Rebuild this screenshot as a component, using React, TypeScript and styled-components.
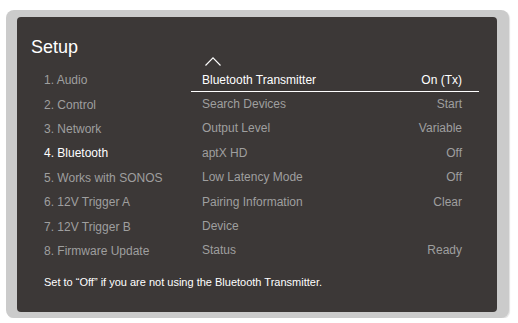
import React from "react";
import styled, { createGlobalStyle } from "styled-components";

const GlobalStyle = createGlobalStyle`
  html, body {
    margin: 0;
    padding: 0;
    background: #ffffff;
  }
  body {
    font-family: "Liberation Sans", Arial, sans-serif;
  }
`;

const Frame = styled.div`
  box-sizing: border-box;
  margin: 10px 0 0 6px;
  width: 503px;
  height: 308px;
  padding: 7px 12px 6px 11px;
  background: #cbcbcb;
  border-radius: 8px;
  box-shadow: 1px 1px 1px #e2e2e2;
`;

const Panel = styled.div`
  box-sizing: border-box;
  width: 480px;
  height: 295px;
  padding: 20px 0 0 14px;
  background: #3c3837;
  border-radius: 4px;
  display: flex;
  flex-direction: column;
`;

const Title = styled.div`
  font-size: 18px;
  line-height: 20px;
  color: #ffffff;
`;

const Columns = styled.div`
  display: flex;
  margin-left: 13px;
`;

const Menu = styled.div`
  width: 147px;
  padding-top: 11px;
  display: flex;
  flex-direction: column;
`;

const MenuItem = styled.div<{ $active?: boolean }>`
  height: 24.4px;
  display: flex;
  align-items: center;
  font-size: 12px;
  color: ${(p) => (p.$active ? "#ffffff" : "#9f9f9f")};
`;

const Settings = styled.div`
  width: 288px;
  display: flex;
  flex-direction: column;
`;

const CaretArea = styled.div`
  height: 11px;
  padding-left: 14px;
  svg {
    display: block;
  }
`;

const Row = styled.div<{ $selected?: boolean }>`
  box-sizing: border-box;
  height: 24.4px;
  padding: 0 17px 0 11px;
  display: flex;
  align-items: center;
  justify-content: space-between;
  font-size: 12px;
  color: ${(p) => (p.$selected ? "#ffffff" : "#9f9f9f")};
  border-bottom: 1px solid ${(p) => (p.$selected ? "#ffffff" : "transparent")};
`;

const Hint = styled.div`
  margin: 13px 0 0 13px;
  font-size: 11px;
  line-height: 13px;
  color: #ffffff;
`;

const menu = [
  "1. Audio",
  "2. Control",
  "3. Network",
  "4. Bluetooth",
  "5. Works with SONOS",
  "6. 12V Trigger A",
  "7. 12V Trigger B",
  "8. Firmware Update",
];

const settings: [string, string][] = [
  ["Bluetooth Transmitter", "On (Tx)"],
  ["Search Devices", "Start"],
  ["Output Level", "Variable"],
  ["aptX HD", "Off"],
  ["Low Latency Mode", "Off"],
  ["Pairing Information", "Clear"],
  ["Device", ""],
  ["Status", "Ready"],
];

function App() {
  return (
    <>
      <GlobalStyle />
      <Frame>
        <Panel>
          <Title>Setup</Title>
          <Columns>
            <Menu>
              {menu.map((m) => (
                <MenuItem key={m} $active={m === "4. Bluetooth"}>
                  {m}
                </MenuItem>
              ))}
            </Menu>
            <Settings>
              <CaretArea>
                <svg width="16" height="9" viewBox="0 0 16 9">
                  <polyline
                    points="0.5,8.5 8,0.8 15.5,8.5"
                    fill="none"
                    stroke="#ffffff"
                    strokeWidth="1.1"
                  />
                </svg>
              </CaretArea>
              {settings.map(([label, value], i) => (
                <Row key={label} $selected={i === 0}>
                  <span>{label}</span>
                  <span>{value}</span>
                </Row>
              ))}
            </Settings>
          </Columns>
          <Hint>Set to “Off” if you are not using the Bluetooth Transmitter.</Hint>
        </Panel>
      </Frame>
    </>
  );
}

export default App;
